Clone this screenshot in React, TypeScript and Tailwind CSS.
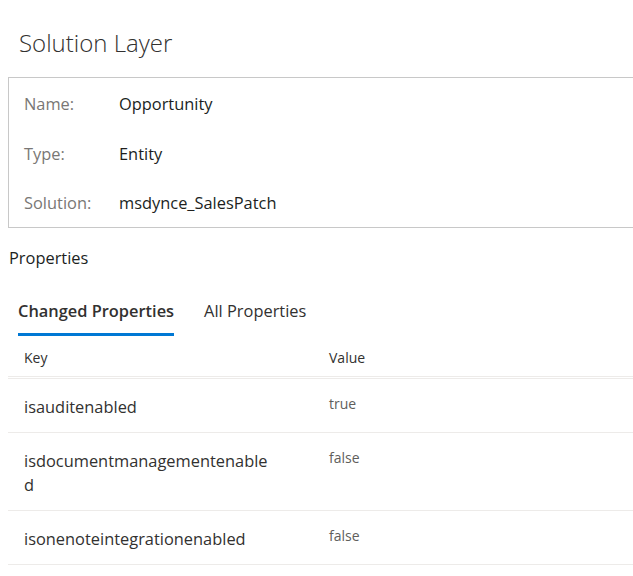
import React from "react";

const info = [
  { label: "Name:", value: "Opportunity" },
  { label: "Type:", value: "Entity" },
  { label: "Solution:", value: "msdynce_SalesPatch" },
];

const rows = [
  { key: "isauditenabled", value: "true" },
  { key: "isdocumentmanagementenabled", value: "false" },
  { key: "isonenoteintegrationenabled", value: "false" },
];

export default function App() {
  return (
    <div
      className="w-[633px] h-[576px] overflow-hidden bg-white text-[#323130]"
      style={{ fontFamily: '"Open Sans", "Noto Sans", sans-serif' }}
    >
      <div className="w-[700px] pl-2">
        {/* Title */}
        <h1 className="pl-[11px] pt-[27px] h-[77px] text-[24px] leading-[32px] font-light text-[#323130]">
          Solution Layer
        </h1>

        {/* Summary box */}
        <div className="border border-[#c8c8c8] h-[151px] pl-[15px] pt-[2px]">
          {info.map((item) => (
            <div key={item.label} className="flex h-[49.5px] items-center text-[16.4px]">
              <span className="w-[95px] text-[#797775]">{item.label}</span>
              <span className="text-[#201f1e]">{item.value}</span>
            </div>
          ))}
        </div>

        {/* Properties */}
        <div className="pl-[1px] pt-[19px] text-[16.4px] leading-[22px] text-[#201f1e]">Properties</div>

        {/* Tabs */}
        <div className="flex pl-[10px] pt-[31px] gap-[30px] text-[16.4px]">
          <div className="flex flex-col">
            <span className="font-semibold leading-[22px] text-[#323130]">Changed Properties</span>
            <span className="mt-[11px] h-[3px] bg-[#0078d4]" />
          </div>
          <span className="leading-[22px] text-[#323130]">All Properties</span>
        </div>

        {/* Table */}
        <div className="mt-[8px]">
          <div className="flex h-[33px] pt-[4px] border-b border-[#edebe9] text-[14px] leading-[20px] text-[#323130]">
            <span className="pl-[16px] w-[321px]">Key</span>
            <span>Value</span>
          </div>
          {rows.map((r, i) => (
            <div
              key={r.key}
              className={`flex border-b border-[#edebe9] ${i === 0 ? "border-t mt-[1px]" : ""}`}
            >
              <div className="ml-[16px] w-[248px] mr-[57px] pt-[16px] pb-[13px] text-[16.4px] leading-[24px] break-all text-[#323130]">
                {r.key}
              </div>
              <div className="pt-[15px] text-[14px] leading-[20px] text-[#605e5c]">{r.value}</div>
            </div>
          ))}
        </div>
      </div>
    </div>
  );
}
